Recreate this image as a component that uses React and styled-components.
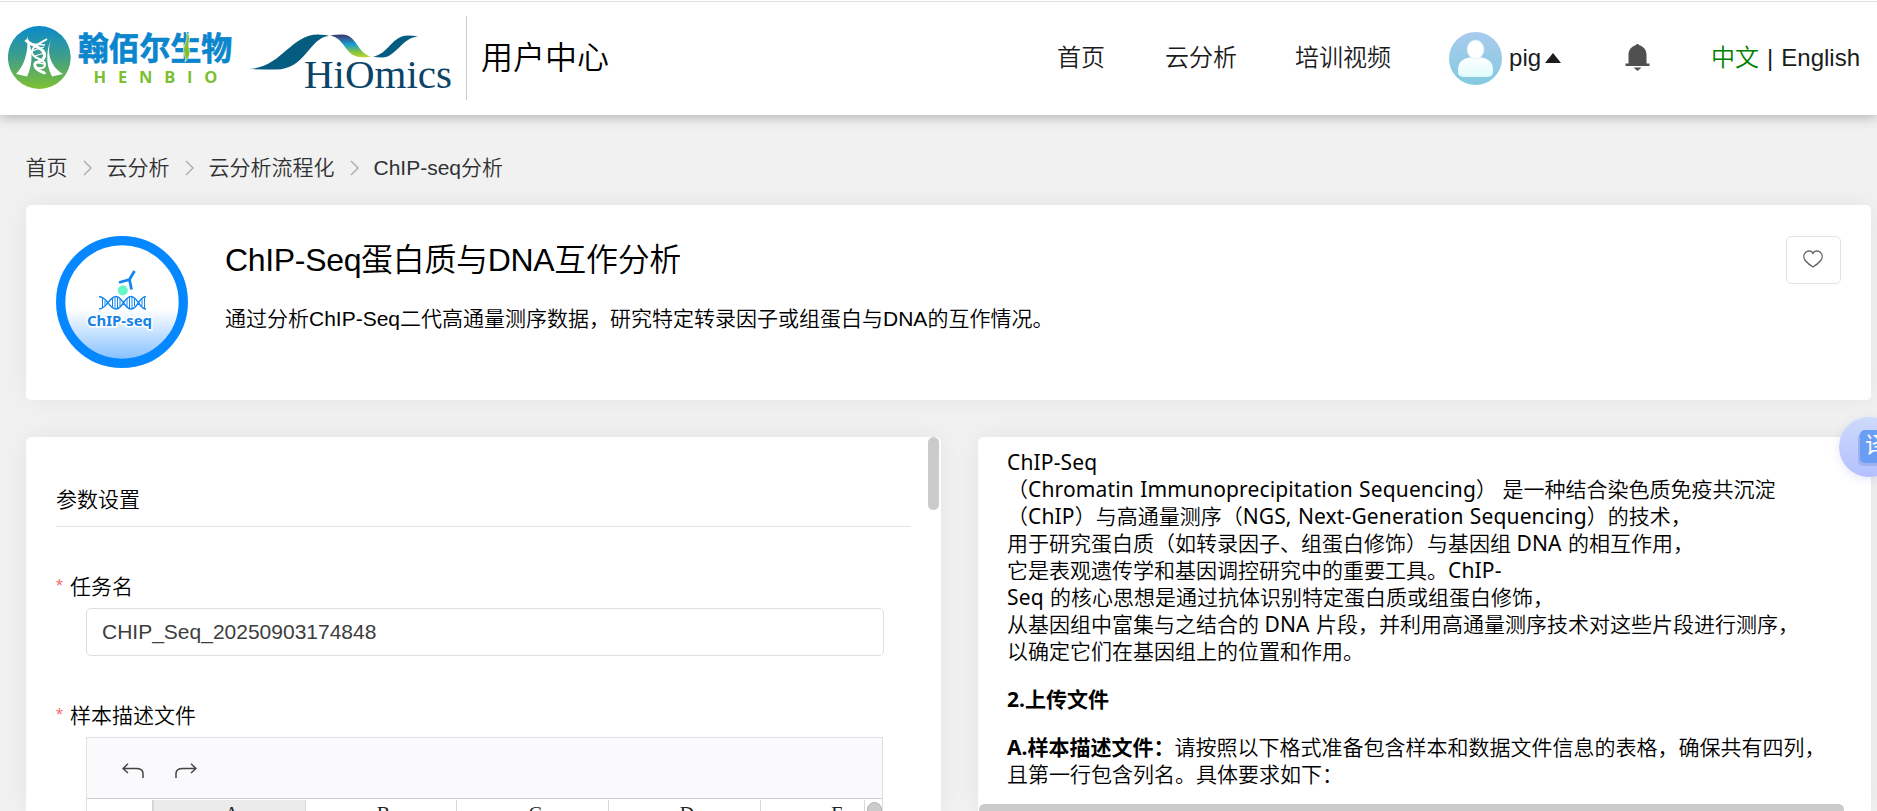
import React from "react";
import styled, { createGlobalStyle } from "styled-components";

const GlobalStyle = createGlobalStyle`
  *, *::before, *::after { box-sizing: border-box; }
  body {
    margin: 0;
    background: #f1f1f1;
    color: #000;
    font-family: "Liberation Sans", "Noto Sans CJK SC", sans-serif;
    font-size: 21px;
    font-weight: 350;
    line-height: 28px;
    overflow: hidden;
  }
  p, h1, h2 { margin: 0; font-weight: inherit; font-size: inherit; }
`;

const Page = styled.div`
  position: relative;
  display: flex;
  flex-direction: column;
  height: 811px;
  overflow: hidden;
`;

const Header = styled.header`
  display: flex;
  align-items: center;
  flex: none;
  height: 115px;
  padding: 0 17px 0 8px;
  background: #fff;
  border-top: 1px solid #fff;
  box-shadow: inset 0 1px 0 #e0e0e0, 0 2px 12px rgba(0, 0, 0, 0.28);
`;

const Brand = styled.div`
  display: flex;
  align-items: center;
  height: 84px;
  width: 459px;
  flex: none;
  border-right: 1px solid #ccc;
`;

const Heading = styled.div`
  margin-left: 14px;
  font-size: 32px;
  line-height: 44px;
  white-space: nowrap;
`;

const Nav = styled.nav`
  display: flex;
  align-items: center;
  margin-left: auto;
  font-size: 24px;
  line-height: 32px;
  color: #1c1c1c;
  white-space: nowrap;
`;

const NavLink = styled.span`
  margin-right: ${(p) => p.$gap}px;
`;

const User = styled.div`
  display: flex;
  align-items: center;
  width: 176px;
`;

const UserName = styled.span`
  margin: 0 4px 0 7px;
`;

const BellBox = styled.div`
  display: flex;
  width: 86px;
  padding-bottom: 2px;
`;

const Language = styled.div`
  display: flex;
  gap: 8px;
  span:first-child { color: #008000; }
`;

const Breadcrumb = styled.div`
  display: flex;
  align-items: center;
  height: 90px;
  flex: none;
  padding: 16px 0 0 25.5px;
  color: #303133;
  white-space: nowrap;
`;

const ChevronIcon = styled.svg`
  margin: 0 15px;
  width: 9px;
  height: 16px;
  fill: none;
  stroke: #a8abb2;
  stroke-width: 1.4;
`;

const Card = styled.section`
  background: #fff;
  border-radius: 5px;
  box-shadow: 0 0 26px rgba(0, 0, 0, 0.06);
`;

const Intro = styled(Card)`
  display: flex;
  flex: none;
  height: 195px;
  margin: 0 6px 0 26px;
  padding: 31px 30px;
`;

const IntroText = styled.div`
  flex: 1;
  margin: 1px 0 0 37px;
  h1 {
    font-size: 32px;
    line-height: 46px;
    letter-spacing: -0.33px;
  }
  p { margin-top: 21px; line-height: 30px; }
`;

const LikeButton = styled.button`
  display: flex;
  align-items: center;
  justify-content: center;
  width: 55px;
  height: 48px;
  padding: 0 1px 2px 0;
  border: 1px solid #e4e4e4;
  border-radius: 5px;
  background: #fff;
`;

const Columns = styled.main`
  display: grid;
  grid-template-columns: 915px 893px;
  column-gap: 37px;
  flex: 1;
  min-height: 0;
  padding: 37px 6px 0 26px;
`;

const Panel = styled(Card)`
  display: flex;
  min-width: 0;
  border-radius: 5px 5px 0 0;
  height: 374px;
`;

const Form = styled.div`
  flex: none;
  width: 855px;
  margin: 0 17px 0 30px;
`;

const FormTitle = styled.h2`
  height: 90px;
  padding-top: 49px;
  border-bottom: 1px solid #e4e4e4;
`;

const Field = styled.div`
  padding: ${(p) => p.$top}px 27px 0 30px;
`;

const Label = styled.label`
  display: flex;
  gap: 7px;
  margin-left: -30px;
  height: 35px;
  line-height: 28px;
  i {
    color: #f56c6c;
    font-size: 18px;
    font-style: normal;
    line-height: 26px;
    width: 7px;
  }
`;

const Input = styled.input`
  display: block;
  width: 798px;
  height: 48px;
  padding: 0 15px 1px;
  border: 1px solid #dcdfe6;
  border-radius: 5px;
  color: #3d3d3d;
  font: 21px "Liberation Sans", sans-serif;
`;

const Sheet = styled.div`
  width: 797px;
  height: 80px;
  overflow: hidden;
  border: 1px solid #e0e0e3;
  border-bottom: 0;
`;

const Toolbar = styled.div`
  display: flex;
  align-items: center;
  gap: 31px;
  height: 61px;
  padding: 6px 0 0 35px;
  background: #fafafc;
  border-bottom: 1px solid #d0d0d0;
`;

const ToolIcon = styled.svg`
  width: 22px;
  height: 16px;
  fill: none;
  stroke: #444;
  stroke-width: 1.5;
  transform: ${(p) => (p.$flip ? "scaleX(-1)" : "none")};
`;

const ColumnHeads = styled.div`
  display: flex;
  padding-top: 1px;
  height: 30px;
`;

const Corner = styled.div`
  width: 67px;
  border-right: 2px solid #d5d5d5;
`;

const ColumnHead = styled.div`
  flex: none;
  width: ${(p) => p.$width || 151.7}px;
  padding-top: 3px;
  border-right: 1.5px solid #d8d8d8;
  background: ${(p) => (p.$active ? "#ebebeb" : "#fff")};
  color: #222;
  font: 20px/22px "Liberation Serif", serif;
  text-align: center;
  text-indent: ${(p) => p.$indent || 5}px;
`;

const SheetThumb = styled.div`
  width: 15px;
  height: 40px;
  margin: 2px 0 0 2px;
  border-radius: 8px;
  border: 1px solid #b4b4b4;
  background: #cbcbcb;
`;

const ScrollThumb = styled.div`
  width: 11px;
  height: 73px;
  border-radius: 6px;
  background: #cbcbcb;
`;

const Article = styled.article`
  display: flex;
  flex-direction: column;
  width: 100%;
  padding: 12px 27px 0 1px;
  font-family: "Noto Sans", "Noto Sans CJK SC", sans-serif;
  line-height: 27px;
`;

const Paragraph = styled.p`
  margin: 0 0 21px 28px;
  white-space: nowrap;
  strong { font-weight: 700; }
`;

const Line = styled.span`
  display: block;
  height: 27px;
`;

const Latin = styled.span`
  font-weight: 400;
  letter-spacing: 0.14px;
  word-spacing: 0.7px;
`;

const ArticleScroll = styled.div`
  flex: none;
  width: 865px;
  height: 11px;
  margin-top: -5px;
  border-radius: 6px;
  background: #cbcbcb;
`;

const Translate = styled.div`
  position: absolute;
  top: 417px;
  right: -22px;
  display: flex;
  align-items: center;
  width: 60px;
  height: 60px;
  padding: 0 0 1px 21px;
  border-radius: 30px;
  background: linear-gradient(#cddafb, #b4c0ff);
  box-shadow: 0 2px 10px rgba(120, 140, 220, 0.2);
`;

const TranslateMark = styled.span`
  width: 34px;
  height: 33px;
  padding-left: 5px;
  border-radius: 5px;
  background: #6a9df4;
  box-shadow: -2px 3px 0 #9fb2ef;
  color: #fff;
  font-size: 23px;
  font-weight: 400;
  line-height: 31px;
`;

const HenbioLogo = () => (
  <svg width="232" height="76" viewBox="8 20 232 76">
    <defs>
      <linearGradient id="globe" x1="0" y1="0" x2="0" y2="1">
        <stop offset="0" stopColor="#0a8acb" />
        <stop offset="0.5" stopColor="#3f9f87" />
        <stop offset="1" stopColor="#7fc12f" />
      </linearGradient>
    </defs>
    <circle cx="39.3" cy="57.5" r="31.4" fill="url(#globe)" />
    <g fill="#fff">
      <path d="M27 36C33 50 33 64 27 76.500L16 74C24 66 29 52 27 36z" />
      <path d="M53 36C46 48 48 65 63 74L52 76.500C45 63 46 48 53 36z" />
    </g>
    <g fill="none" stroke="#fff">
      <path d="M25.500 40C31 46 46 48 44.500 56S33 60 35 66s9 5 10 8" strokeWidth="3" />
      <path d="M47 39C40 43 31 47 32 53s13 6 13 11-5 5-10 3" strokeWidth="2" />
      <path d="M31 44l14 1M32 51l12-4M35 56l9-3M35 62l9 2" strokeWidth="1.300" />
    </g>
    <text x="78" y="60" textLength="154" lengthAdjust="spacingAndGlyphs" fontFamily="Noto Sans CJK SC, sans-serif" fontWeight="700" fontSize="32" fill="#0b86cd" stroke="#0b86cd" strokeWidth="0.700">翰佰尔生物</text>
    <path d="M186 32c7 5 1 11 3 16s0 10-4 14c2-6-3-9-1-15s4-10 2-15z" fill="#7fc12f" stroke="#fff" strokeWidth="0.600" />
    <text x="93.500" y="82.500" textLength="124" fontFamily="Open Sans, sans-serif" fontWeight="700" fontSize="16.500" fill="#7cbf31">HENBIO</text>
  </svg>
);

const HiOmicsLogo = () => (
  <svg width="212" height="76" viewBox="240 19.500 212 76">
    <defs>
      <linearGradient id="strand" x1="0" y1="0" x2="0" y2="1">
        <stop offset="0.05" stopColor="#3a3f78" />
        <stop offset="0.45" stopColor="#1aa0d2" />
        <stop offset="0.75" stopColor="#7fc241" />
        <stop offset="1" stopColor="#c0d42f" />
      </linearGradient>
    </defs>
    <path d="M249 68.500C281 67 291 34 318 34q7 0 11 1.500C309 37 306 69 276 69q-14 0-27-.5z" fill="#045c80" />
    <path d="M330 35q5-1 12-1c15 0 15 19 29 22q-4 1-9 .8C344 56 346 38 330 35z" fill="url(#strand)" />
    <path d="M373 56C388 54 392 35 408 35q5 0 10 1C402 37 396 57 382 57q-5 0-9-1z" fill="#045c80" />
    <text x="304" y="87.500" textLength="148" lengthAdjust="spacingAndGlyphs" fontFamily="Liberation Serif, serif" fontWeight="400" fontSize="40" fill="#0b4467">HiOmics</text>
  </svg>
);

const Avatar = () => (
  <svg width="53" height="53" viewBox="0 0 53 53">
    <defs>
      <linearGradient id="sky" x1="0" y1="0" x2="0" y2="1">
        <stop offset="0" stopColor="#a9cbee" />
        <stop offset="1" stopColor="#83cae0" />
      </linearGradient>
      <linearGradient id="shirt" x1="0" y1="0" x2="0" y2="1">
        <stop offset="0" stopColor="#fff" />
        <stop offset="1" stopColor="#e1fcfb" />
      </linearGradient>
    </defs>
    <circle cx="26.500" cy="26.500" r="26.500" fill="url(#sky)" />
    <path d="M9 38c0-8 5-13 17.500-13S44 30 44 38c0 5-1 7-7 7H16c-6 0-7-2-7-7z" fill="url(#shirt)" />
    <ellipse cx="26.500" cy="17.500" rx="8.500" ry="9.500" fill="#fff" stroke="#cbe7f2" strokeWidth="0.600" />
  </svg>
);

const Bell = () => (
  <svg width="25" height="28" viewBox="0 0 25 28" fill="#505050">
    <path d="M10.700 2.300a1.900 1.900 0 0 1 3.600 0C19 3.500 21.500 7.500 21.500 12v8.500H24.500V23H.5v-2.500h3V12c0-4.500 2.500-8.500 7.200-9.700z" />
    <path d="M8.500 24.500h8L12.500 28z" />
  </svg>
);

const ChipSeqBadge = () => (
  <svg width="132" height="132" viewBox="0 0 132 132">
    <defs>
      <linearGradient id="pool" x1="0" y1="0" x2="0" y2="1">
        <stop offset="0.560" stopColor="#fff" />
        <stop offset="1" stopColor="#7cbcff" />
      </linearGradient>
    </defs>
    <circle cx="66" cy="66" r="61.300" fill="url(#pool)" stroke="#0487ff" strokeWidth="9.300" />
    <path d="M63 46.500L73.500 43.500L78.500 35M73.500 43.500L75.500 53.500" fill="none" stroke="#1286ee" strokeWidth="2.800" />
    <circle cx="66.800" cy="54.500" r="5" fill="#66f7c7" />
    <g fill="none" stroke="#1286ee" strokeWidth="1.400">
      <path d="M43 60.500c8 0 10 12.500 17 12.500s8-12.500 15-12.500 8 12.500 15 12.500M43 73c8 0 10-12.500 17-12.500S68 73 75 73s8-12.500 15-12.500" />
      <path d="M46.500 62v9.500M49 65v4M56.500 62v9.500M59 61v12M61.500 61v12M64 63v7M71 62v9.500M73.500 61v12M76 61v12M78.500 63v7M86 63v7M88.500 61v12" strokeWidth="1" />
    </g>
    <text x="31" y="90" textLength="65" lengthAdjust="spacingAndGlyphs" fontFamily="Noto Sans, sans-serif" fontWeight="700" fontSize="14.500" fill="#1583e6" stroke="#fff" strokeWidth="3" paintOrder="stroke">ChIP-seq</text>
  </svg>
);

const Chevron = () => (
  <ChevronIcon viewBox="0 0 9 16"><path d="M1 1l7 7-7 7" /></ChevronIcon>
);

const TurnArrow = ({ flip }) => (
  <ToolIcon $flip={flip} viewBox="0 0 22 16">
    <path d="M6 .8L1 5.500l5 4.500M1 5.500h13c4.500 0 7 2 7 5V15" />
  </ToolIcon>
);

const Required = ({ children }) => (
  <Label><i>*</i>{children}</Label>
);

// Sets runs of Latin text in the regular weight beside the lighter Chinese.
const Mixed = ({ text }) =>
  text.split(/([A-Za-z][A-Za-z ,-]*)/).map((part, i) =>
    i % 2 ? <Latin key={i}>{part}</Latin> : part
  );

const crumbs = ["首页", "云分析", "云分析流程化", "ChIP-seq分析"];

const description = [
  "ChIP-Seq",
  "（Chromatin Immunoprecipitation Sequencing） 是一种结合染色质免疫共沉淀",
  "（ChIP）与高通量测序（NGS, Next-Generation Sequencing）的技术，",
  "用于研究蛋白质（如转录因子、组蛋白修饰）与基因组 DNA 的相互作用，",
  "它是表观遗传学和基因调控研究中的重要工具。ChIP-",
  "Seq 的核心思想是通过抗体识别特定蛋白质或组蛋白修饰，",
  "从基因组中富集与之结合的 DNA 片段，并利用高通量测序技术对这些片段进行测序，",
  "以确定它们在基因组上的位置和作用。",
];

export default function App() {
  return (
    <Page>
      <GlobalStyle />
      <Header>
        <Brand>
          <HenbioLogo />
          <HiOmicsLogo />
        </Brand>
        <Heading>用户中心</Heading>
        <Nav>
          <NavLink $gap={60}>首页</NavLink>
          <NavLink $gap={58}>云分析</NavLink>
          <NavLink $gap={58}>培训视频</NavLink>
          <User>
            <Avatar />
            <UserName>pig</UserName>
            <svg width="16" height="10" viewBox="0 0 16 10"><path d="M8 0l8 10H0z" fill="#1c1c1c" /></svg>
          </User>
          <BellBox><Bell /></BellBox>
          <Language><span>中文</span><span>|</span><span>English</span></Language>
        </Nav>
      </Header>

      <Breadcrumb>
        {crumbs.map((crumb, i) => (
          <React.Fragment key={crumb}>
            {i > 0 && <Chevron />}
            <span>{crumb}</span>
          </React.Fragment>
        ))}
      </Breadcrumb>

      <Intro>
        <ChipSeqBadge />
        <IntroText>
          <h1>ChIP-Seq蛋白质与DNA互作分析</h1>
          <p>通过分析ChIP-Seq二代高通量测序数据，研究特定转录因子或组蛋白与DNA的互作情况。</p>
        </IntroText>
        <LikeButton aria-label="收藏">
          <svg width="20" height="18" viewBox="0 0 20 18" fill="none" stroke="#666" strokeWidth="1.400">
            <path d="M10 3.300C8.500.5 5 .2 2.700 2.300.3 4.500.3 8 2.500 10.800 4.500 13.300 7.500 15.500 10 17c2.500-1.500 5.500-3.700 7.500-6.200 2.200-2.800 2.200-6.300-.2-8.500C15 .2 11.500.5 10 3.300z" />
          </svg>
        </LikeButton>
      </Intro>

      <Columns>
        <Panel>
          <Form>
            <FormTitle>参数设置</FormTitle>
            <Field $top={46}>
              <Required>任务名</Required>
              <Input readOnly value="CHIP_Seq_20250903174848" />
            </Field>
            <Field $top={46}>
              <Required>样本描述文件</Required>
              <Sheet>
                <Toolbar>
                  <TurnArrow />
                  <TurnArrow flip />
                </Toolbar>
                <ColumnHeads>
                  <Corner />
                  <ColumnHead $active>A</ColumnHead>
                  <ColumnHead>B</ColumnHead>
                  <ColumnHead>C</ColumnHead>
                  <ColumnHead>D</ColumnHead>
                  <ColumnHead $width={104} $indent={50}>E</ColumnHead>
                  <SheetThumb />
                </ColumnHeads>
              </Sheet>
            </Field>
          </Form>
          <ScrollThumb />
        </Panel>

        <Panel>
          <Article>
            <Paragraph>
              {description.map((text) => (
                <Line key={text}><Mixed text={text} /></Line>
              ))}
            </Paragraph>
            <Paragraph><strong>2.上传文件</strong></Paragraph>
            <Paragraph>
              <Line><strong>A.样本描述文件：</strong>请按照以下格式准备包含样本和数据文件信息的表格，确保共有四列，</Line>
              <Line>且第一行包含列名。具体要求如下：</Line>
            </Paragraph>
            <ArticleScroll />
          </Article>
        </Panel>
      </Columns>

      <Translate><TranslateMark>译</TranslateMark></Translate>
    </Page>
  );
}
